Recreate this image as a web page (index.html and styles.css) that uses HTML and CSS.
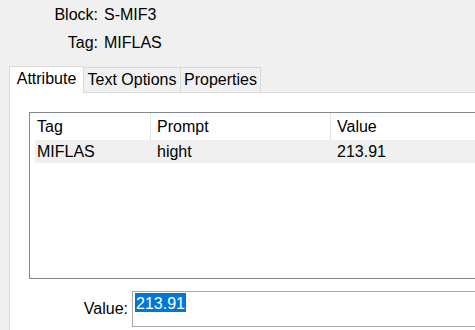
FILE: index.html
```html
<!DOCTYPE html>
<html lang="en">
<head>
    <meta charset="UTF-8">
    <title>Edit Attributes</title>
    <link rel="stylesheet" href="styles.css">
</head>
<body>
    <div class="info">
        <span class="info-label">Block:</span>
        <span>S-MIF3</span>
        <span class="info-label">Tag:</span>
        <span>MIFLAS</span>
    </div>

    <div class="tabs">
        <div class="tab tab-active tab-attr">Attribute</div>
        <div class="tab tab-text">Text Options</div>
        <div class="tab tab-props">Properties</div>
    </div>

    <div class="panel">
        <div class="list">
            <div class="list-head">
                <div class="col col-first">Tag</div>
                <div class="col">Prompt</div>
                <div class="col col-last">Value</div>
            </div>
            <div class="list-row">
                <div class="col col-first">MIFLAS</div>
                <div class="col">hight</div>
                <div class="col">213.91</div>
            </div>
        </div>

        <div class="value-row">
            <label class="value-label">Value:</label>
            <div class="value-box"><span class="selected">213.91</span></div>
        </div>
    </div>
</body>
</html>
```

FILE: styles.css
```css
html, body {
    height: 100%;
}
body {
    margin: 0;
    background-color: #f0f0f0;
    font-family: 'Liberation Sans', Arial, sans-serif;
    font-size: 16px;
    line-height: 18px;
    color: #000;
    overflow: hidden;
    display: flex;
    flex-direction: column;
}
.info {
    display: grid;
    grid-template-columns: 98px 1fr;
    grid-auto-rows: 28px;
    column-gap: 6px;
    padding-top: 6px;
}
.info-label {
    text-align: right;
}
.tabs {
    display: flex;
    align-items: flex-end;
    margin-top: 4px;
    padding-left: 9px;
    position: relative;
    z-index: 1;
}
.tab {
    box-sizing: border-box;
    height: 25px;
    padding-top: 3px;
    text-align: center;
    background-color: #f0f0f0;
    border: 1px solid #d9d9d9;
    border-bottom: none;
    border-left: none;
}
.tab-active {
    height: 27px;
    margin-bottom: -1px;
    padding-top: 3px;
    background-color: #fff;
    border-left: 1px solid #d9d9d9;
}
.tab-attr {
    width: 75px;
}
.tab-text {
    width: 97px;
}
.tab-props {
    width: 80px;
}
.panel {
    flex: 1;
    margin-left: 9px;
    padding: 19px 0 0 19px;
    background-color: #fff;
    border-top: 1px solid #d9d9d9;
    border-left: 1px solid #d9d9d9;
}
.list {
    box-sizing: border-box;
    height: 167px;
    border: 1px solid #828790;
    border-right: none;
}
.list-head {
    display: grid;
    grid-template-columns: 121px 180px 1fr;
    height: 27px;
}
.list-head .col {
    padding-top: 5px;
    border-right: 1px solid #e5e5e5;
}
.list-head .col-last {
    border-right: none;
}
.col {
    padding-left: 6px;
}
.col-first {
    padding-left: 7px;
}
.list-row {
    display: grid;
    grid-template-columns: 116px 180px 1fr;
    height: 23px;
    margin-left: 5px;
    background-color: #f0f0f0;
}
.list-row .col {
    padding-top: 3px;
}
.list-row .col-first {
    padding-left: 2px;
}
.value-row {
    display: flex;
    align-items: flex-start;
    margin-top: 12px;
}
.value-label {
    width: 99px;
    padding-top: 9px;
    margin-right: 4px;
    text-align: right;
}
.value-box {
    flex: 1;
    box-sizing: border-box;
    height: 36px;
    padding: 1px 0 0 2px;
    border: 1px solid #a9a9a9;
    border-right: none;
    background-color: #fff;
}
.selected {
    display: inline-block;
    height: 19px;
    padding: 2px 1px 0 1px;
    box-sizing: border-box;
    line-height: 17px;
    background-color: #0078d7;
    color: #fff;
}
```
